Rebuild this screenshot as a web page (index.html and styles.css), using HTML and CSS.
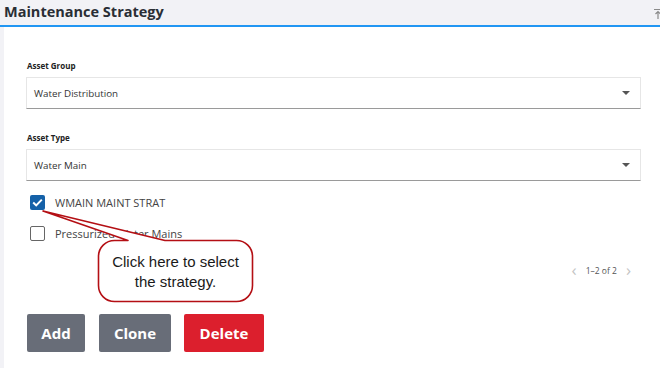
FILE: index.html
```html
<!DOCTYPE html>
<html>
<head>
<meta charset="utf-8">
<link rel="stylesheet" href="styles.css">
</head>
<body>
<div class="page">
  <div class="panel">
    <div class="header">
      <h1 class="title">Maintenance Strategy</h1>
      <svg class="pin" width="10" height="12" viewBox="0 0 10 12"><path d="M1 1.5H9M5 11V3.5M2.5 6L5 3.5L7.5 6" fill="none" stroke="#8a8a8a" stroke-width="1.2"/></svg>
    </div>
    <div class="content">
      <div class="field">
        <div class="label">Asset Group</div>
        <div class="select"><span>Water Distribution</span><span class="caret"></span></div>
      </div>
      <div class="field second">
        <div class="label">Asset Type</div>
        <div class="select"><span>Water Main</span><span class="caret"></span></div>
      </div>
      <div class="options">
        <div class="option">
          <span class="box checked"><svg width="15" height="15" viewBox="0 0 15 15"><path d="M3.2 7.6L6.2 10.4L11.8 4.6" fill="none" stroke="#fff" stroke-width="2"/></svg></span>
          <span class="opt-text">WMAIN MAINT STRAT</span>
        </div>
        <div class="option">
          <span class="box"></span>
          <span class="opt-text">Pressurized Water Mains</span>
        </div>
      </div>
      <div class="pager">
        <span class="chev">&lsaquo;</span>
        <span class="count">1–2 of 2</span>
        <span class="chev">&rsaquo;</span>
      </div>
      <div class="actions">
        <button class="btn grey add">Add</button>
        <button class="btn grey clone">Clone</button>
        <button class="btn red del">Delete</button>
      </div>
    </div>
  </div>
  <svg class="callout" width="660" height="368" viewBox="0 0 660 368">
    <path d="M165 240.5H236.5A16 16 0 0 1 252.5 256.5V285.5A16 16 0 0 1 236.5 301.5H114.5A16 16 0 0 1 98.5 285.5V256.5A16 16 0 0 1 114.5 240.5H128L43 211Z" fill="#fff" stroke="#b40f14" stroke-width="1.6" stroke-linejoin="round"/>
  </svg>
  <div class="callout-text">Click here to select<br>the strategy.</div>
</div>
</body>
</html>
```
FILE: styles.css
```css
html, body {
  margin: 0;
  padding: 0;
  background: #f2f2f6;
}
.page {
  position: relative;
  width: 660px;
  height: 368px;
  overflow: hidden;
  padding-left: 4px;
  box-sizing: border-box;
  font-family: "Open Sans", "Liberation Sans", sans-serif;
}
.panel {
  display: flex;
  flex-direction: column;
  height: 100%;
}
.header {
  height: 25px;
  background: #f2f2f6;
  border-bottom: 2px solid #2196f3;
  display: flex;
  align-items: center;
  justify-content: space-between;
  margin-left: -4px;
  padding-left: 4px;
}
.title {
  margin: 0;
  font-size: 14.5px;
  font-weight: 700;
  color: #2a2e35;
  line-height: 20px;
  margin-top: -2px;
}
.pin {
  margin-right: -3px;
  margin-top: 3px;
}
.content {
  flex: 1;
  background: #fff;
  padding: 33px 19px 0 22px;
  display: flex;
  flex-direction: column;
}
.field {
  display: flex;
  flex-direction: column;
}
.field.second {
  margin-top: 23px;
}
.label {
  font-size: 8px;
  font-weight: 700;
  color: #222;
  line-height: 12px;
  height: 12px;
  margin-bottom: 5px;
  padding-left: 1px;
}
.select {
  height: 30px;
  border: 1px solid #e6e6e6;
  border-bottom: 1px solid #9a9a9a;
  display: flex;
  align-items: center;
  justify-content: space-between;
  padding: 0 10px 0 7px;
  font-size: 9.8px;
  color: #333;
}
.caret {
  width: 0;
  height: 0;
  border-left: 4px solid transparent;
  border-right: 4px solid transparent;
  border-top: 4px solid #555;
}
.options {
  margin-top: 14px;
  display: flex;
  flex-direction: column;
  gap: 16px;
  padding-left: 4px;
}
.option {
  display: flex;
  align-items: center;
  height: 15px;
}
.box {
  width: 15px;
  height: 15px;
  box-sizing: border-box;
  border: 1.5px solid #666;
  border-radius: 2px;
  display: block;
}
.box.checked {
  background: #1561a8;
  border: none;
}
.box svg {
  display: block;
}
.opt-text {
  margin-left: 10px;
  font-size: 11px;
  color: #444;
}
.pager {
  margin-top: 23px;
  align-self: flex-end;
  margin-right: 10px;
  display: flex;
  align-items: center;
  gap: 9px;
  height: 12px;
  color: #aaa;
}
.chev {
  font-size: 17px;
  line-height: 12px;
  color: #c4c4c4;
}
.count {
  font-size: 8.5px;
  color: #555;
}
.actions {
  margin-top: 38px;
  display: flex;
  padding-left: 1px;
}
.btn {
  height: 38px;
  border: none;
  border-radius: 2px;
  color: #fff;
  font-family: "Open Sans", "Liberation Sans", sans-serif;
  font-weight: 700;
  font-size: 15px;
  padding: 0;
}
.btn.grey {
  background: #686d78;
}
.btn.red {
  background: #dc1f2d;
}
.add { width: 58px; }
.clone { width: 72px; margin-left: 14px; }
.del { width: 80px; margin-left: 13px; }
.callout {
  position: absolute;
  left: 0;
  top: 0;
  pointer-events: none;
}
.callout-text {
  position: absolute;
  left: 98px;
  top: 252px;
  width: 155px;
  text-align: center;
  font-family: "Liberation Sans", Arial, sans-serif;
  font-size: 15px;
  line-height: 20px;
  color: #1a1a1a;
}
```
